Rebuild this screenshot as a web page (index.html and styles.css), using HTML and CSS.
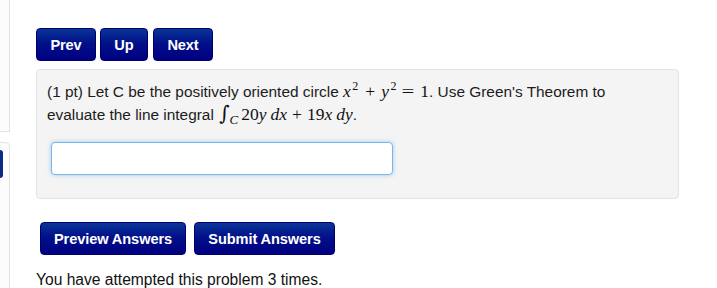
FILE: index.html
```html
<!DOCTYPE html>
<html>
<head>
<meta charset="utf-8">
<link rel="stylesheet" href="styles.css">
</head>
<body>
<div class="page">
  <aside class="sidebar">
    <div class="side-top"></div>
    <div class="side-bottom"><div class="side-tab"></div></div>
  </aside>
  <main class="main">
    <nav class="nav">
      <button class="btn nav-prev">Prev</button>
      <button class="btn nav-up">Up</button>
      <button class="btn nav-next">Next</button>
    </nav>
    <section class="problem">
      <p class="statement">(1 pt) Let C be the positively oriented circle <span class="math"><i>x</i><sup>2</sup><span class="op op-wide">+</span><i>y</i><sup>2</sup><span class="rel">=</span>1</span>. Use Green's Theorem to evaluate the line integral <span class="math"><span class="int">∫</span><sub><i>C</i></sub>20<i>y</i><span class="thin"></span><i>d</i><i>x</i><span class="op">+</span>19<i>x</i><span class="thin"></span><i>d</i><i>y</i></span>.</p>
      <input class="answer" type="text">
    </section>
    <div class="actions">
      <button class="btn btn-preview">Preview Answers</button>
      <button class="btn btn-submit">Submit Answers</button>
    </div>
    <p class="attempts">You have attempted this problem 3 times.</p>
  </main>
</div>
</body>
</html>
```
FILE: styles.css
```css
html, body {
  margin: 0;
  padding: 0;
  background: #fff;
}
body {
  font-family: "Liberation Sans", Arial, sans-serif;
  font-size: 15.4px;
  color: #1c1c1c;
  width: 717px;
  height: 288px;
  overflow: hidden;
}
.page {
  display: flex;
  gap: 26px;
}
.sidebar {
  width: 10px;
  display: flex;
  flex-direction: column;
  flex-shrink: 0;
}
.side-top {
  height: 132px;
  box-sizing: border-box;
  border-right: 1px solid #e3e3e3;
  border-bottom: 1px solid #e3e3e3;
  background: #fcfcfc;
}
.side-bottom {
  margin-top: 10px;
  height: 160px;
  box-sizing: border-box;
  border-top: 1px solid #e3e3e3;
  border-right: 1px solid #e3e3e3;
  border-top-right-radius: 5px;
  background: #fcfcfc;
  padding-top: 7px;
}
.side-tab {
  width: 3px;
  height: 28px;
  background: #0a2a86;
  border-radius: 0 3px 3px 0;
}
.main {
  width: 643px;
  padding-top: 28px;
}
.nav {
  display: flex;
  gap: 4px;
}
.btn {
  font-family: "Liberation Sans", Arial, sans-serif;
  font-weight: bold;
  font-size: 14.6px;
  color: #fff;
  height: 33px;
  padding: 0;
  border: 1px solid #00006a;
  border-radius: 4px;
  background: linear-gradient(to bottom, #0a3597 0%, #02108a 45%, #000080 100%);
  letter-spacing: -0.1px;
  cursor: pointer;
}
.nav-prev { width: 60px; }
.nav-up { width: 48px; }
.nav-next { width: 60px; margin-left: 1px; }
.problem {
  margin-top: 8px;
  background: #f4f4f4;
  border: 1px solid #e3e3e3;
  border-radius: 4px;
  padding: 10px 10px 23px 10px;
}
.statement {
  margin: 0;
  line-height: 22px;
  width: 600px;
}
.math {
  font-family: "Liberation Serif", "Times New Roman", serif;
  font-size: 17.5px;
  line-height: 22px;
  color: #111;
}
.math i {
  font-style: italic;
}
.math sup {
  font-size: 12px;
  vertical-align: 7px;
  line-height: 0;
  margin-left: 1.5px;
}
.math sub {
  font-size: 13px;
  vertical-align: -4px;
  line-height: 0;
  margin-left: 0;
  margin-right: 3px;
}
.op {
  display: inline-block;
  margin: 0 5px;
}
.op-wide {
  margin: 0 6px 0 7px;
}
.rel {
  display: inline-block;
  margin: 0 7px;
  transform: scaleX(1.3);
}
.thin {
  display: inline-block;
  width: 4px;
}
.int {
  font-family: "DejaVu Serif", serif;
  font-style: italic;
  font-size: 20px;
  line-height: 0;
  margin-left: 1px;
}
.answer {
  display: block;
  margin: 16px 0 0 4px;
  width: 342px;
  height: 33px;
  box-sizing: border-box;
  border: 1px solid #7ab6ee;
  border-radius: 4px;
  box-shadow: 0 0 4px rgba(102, 175, 233, 0.6);
  background: #fff;
  outline: none;
}
.actions {
  margin-top: 23px;
  padding-left: 4px;
  display: flex;
  gap: 8px;
}
.btn-preview { width: 146px; }
.btn-submit { width: 141px; }
.attempts {
  margin: 16px 0 0 0;
  font-size: 15.6px;
  line-height: 18px;
  color: #111;
}
```
